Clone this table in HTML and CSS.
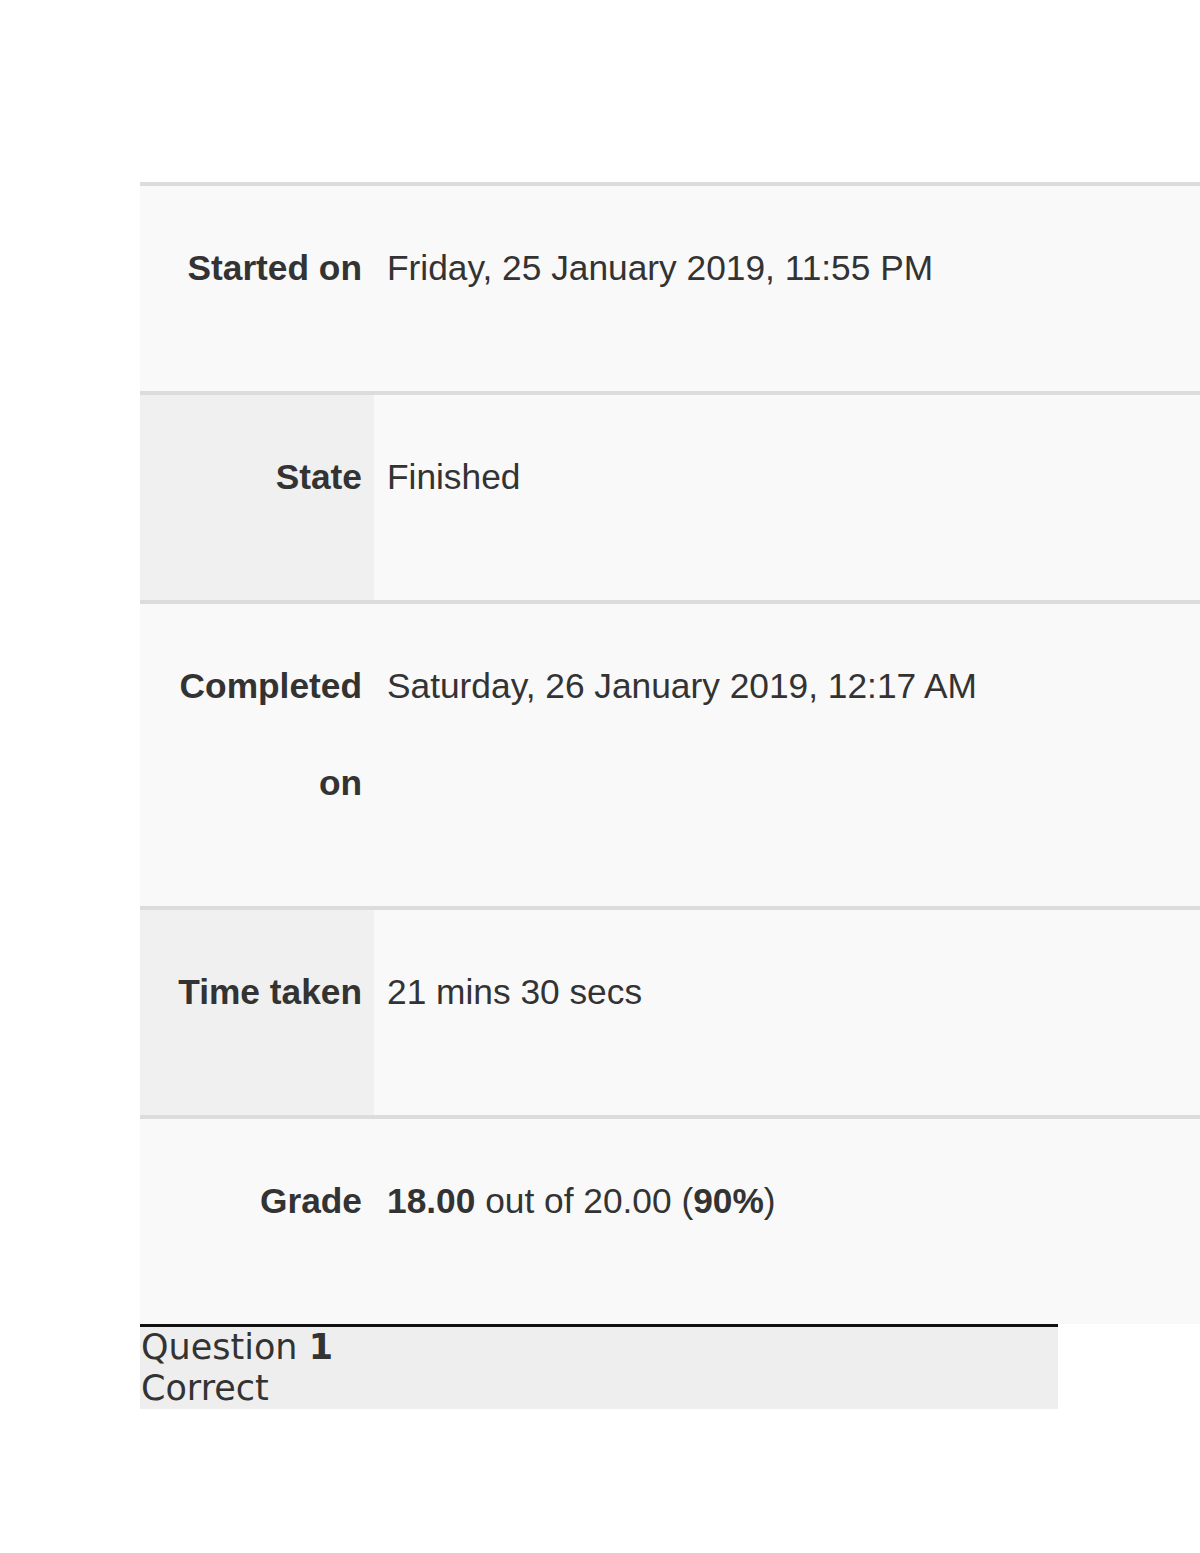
FILE: index.html
```html
<!DOCTYPE html>
<html>
<head>
<meta charset="utf-8">
<link rel="stylesheet" href="styles.css">
</head>
<body>
<div class="page">
  <table class="summary">
    <tbody>
      <tr>
        <th>Started on</th>
        <td>Friday, 25 January 2019, 11:55 PM</td>
      </tr>
      <tr class="alt">
        <th>State</th>
        <td>Finished</td>
      </tr>
      <tr>
        <th>Completed on</th>
        <td>Saturday, 26 January 2019, 12:17 AM</td>
      </tr>
      <tr class="alt">
        <th>Time taken</th>
        <td>21 mins 30 secs</td>
      </tr>
      <tr>
        <th>Grade</th>
        <td><b>18.00</b> out of 20.00 (<b>90%</b>)</td>
      </tr>
    </tbody>
  </table>
  <div class="question">
    <div class="qno">Question <b>1</b></div>
    <div class="qstate">Correct</div>
  </div>
</div>
</body>
</html>
```
FILE: styles.css
```css
html, body {
  margin: 0;
  padding: 0;
  background: #ffffff;
  overflow: hidden;
}
.page {
  width: 1200px;
  overflow: hidden;
  padding: 182px 0 0 140px;
  box-sizing: border-box;
}
.summary {
  border-collapse: collapse;
  width: 1100px;
  font-family: "Liberation Sans", Arial, sans-serif;
  font-size: 35.3px;
  line-height: 97px;
  color: #333333;
}
.summary th,
.summary td {
  border-top: 4px solid #dcdcdc;
  background: #f9f9f9;
  vertical-align: top;
  padding: 33px 12px 75px 13px;
}
.summary th {
  width: 210px;
  text-align: right;
  font-weight: bold;
  padding-left: 12px;
  padding-right: 12px;
}
.summary tr.alt th {
  background: #f0f0f0;
}
.summary td {
  font-weight: normal;
}
.question {
  width: 918px;
  border-top: 3px solid #111111;
  background: #eeeeee;
  font-family: "DejaVu Sans", Verdana, sans-serif;
  font-size: 35px;
  line-height: 41px;
  color: #333333;
  padding-left: 1px;
  box-sizing: border-box;
}
```
